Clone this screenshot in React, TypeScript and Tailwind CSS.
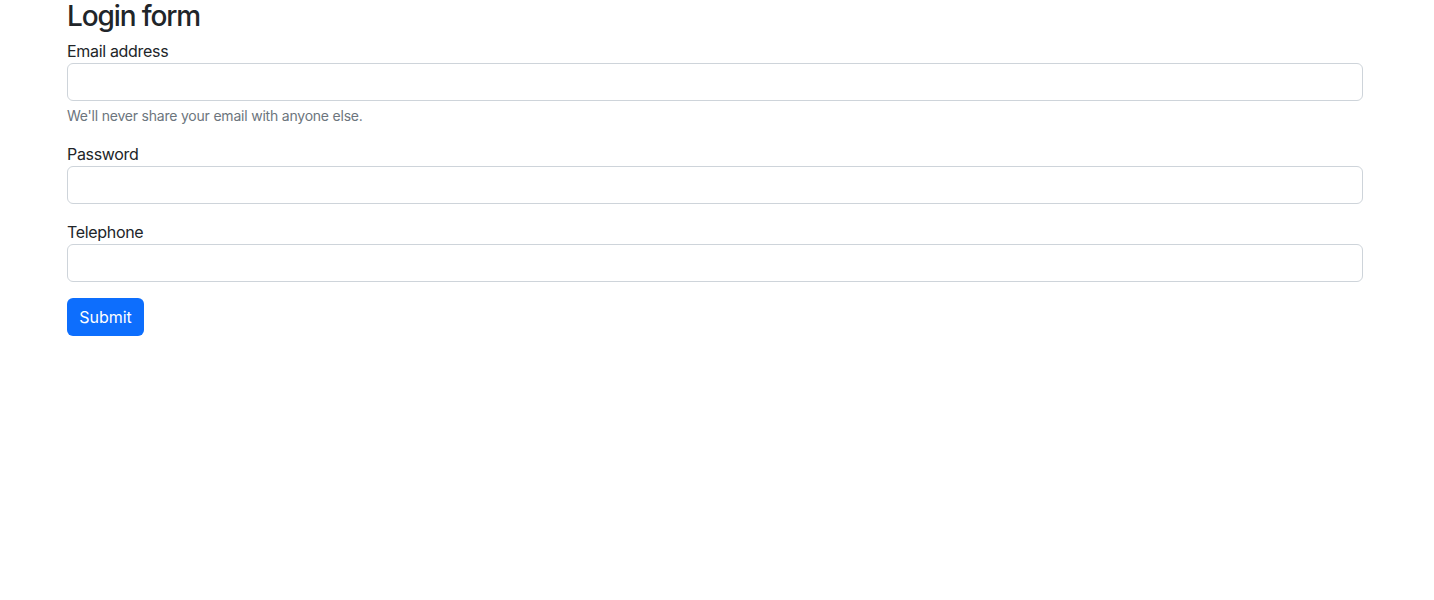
export default function App() {
  return (
    <div className="min-h-[600px] bg-white font-['Inter',sans-serif] text-[#212529]">
      <div className="ml-[67px] w-[1296px]">
        <h3 className="mb-[5px] text-[28px] leading-[1.2] font-medium tracking-[-0.04em]">Login form</h3>
        <form onSubmit={(e) => e.preventDefault()}>
          <div className="mb-4">
            <label htmlFor="email" className="block text-base leading-6 tracking-[-0.02em]">
              Email address
            </label>
            <input
              id="email"
              type="email"
              className="block h-[38px] w-full rounded-[6px] border border-[#ced4da] bg-white px-3 text-base outline-none"
            />
            <div className="mt-1 text-sm leading-[21px] tracking-[-0.015em] text-[#6c757d]">
              We'll never share your email with anyone else.
            </div>
          </div>
          <div className="mb-4">
            <label htmlFor="password" className="block text-base leading-6 tracking-[-0.02em]">
              Password
            </label>
            <input
              id="password"
              type="password"
              className="block h-[38px] w-full rounded-[6px] border border-[#ced4da] bg-white px-3 text-base outline-none"
            />
          </div>
          <div className="mb-4">
            <label htmlFor="tel" className="block text-base leading-6 tracking-[-0.02em]">
              Telephone
            </label>
            <input
              id="tel"
              type="tel"
              className="block h-[38px] w-full rounded-[6px] border border-[#ced4da] bg-white px-3 text-base outline-none"
            />
          </div>
          <button
            type="submit"
            className="h-[38px] w-[77px] rounded-[6px] bg-[#0d6efd] text-base leading-6 text-white"
          >
            Submit
          </button>
        </form>
      </div>
    </div>
  );
}
